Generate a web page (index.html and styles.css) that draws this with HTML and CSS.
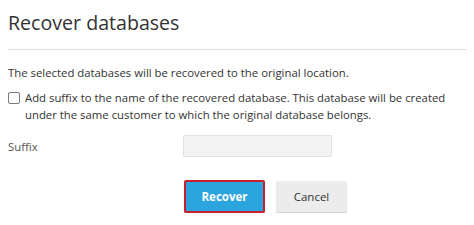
FILE: index.html
```html
<!DOCTYPE html>
<html>
<head>
<meta charset="utf-8">
<link rel="stylesheet" href="styles.css">
</head>
<body>
<div class="dialog">
  <h1 class="title">Recover databases</h1>
  <p class="intro">The selected databases will be recovered to the original location.</p>
  <label class="check-row">
    <input type="checkbox" class="check">
    <span>Add suffix to the name of the recovered database. This database will be created under the same customer to which the original database belongs.</span>
  </label>
  <div class="field-row">
    <span class="field-label">Suffix</span>
    <input type="text" class="field-input">
  </div>
  <div class="actions">
    <button class="btn btn-primary">Recover</button>
    <button class="btn btn-default">Cancel</button>
  </div>
</div>
</body>
</html>
```
FILE: styles.css
```css
html, body {
  margin: 0;
  padding: 0;
  background: #fff;
}
body {
  font-family: "Open Sans", "DejaVu Sans", sans-serif;
  color: #333;
  font-size: 11.35px;
}
.dialog {
  padding: 0 8px;
}
.title {
  margin: 0;
  padding-top: 8px;
  font-size: 19.6px;
  font-weight: 400;
  line-height: 30px;
  color: #333;
  height: 41px;
  border-bottom: 1px solid #dcdcdc;
}
.intro {
  margin: 14px 0 0;
  line-height: 17px;
}
.check-row {
  display: flex;
  gap: 5px;
  margin-top: 8px;
  line-height: 17px;
  padding-right: 10px;
}
.check {
  appearance: none;
  -webkit-appearance: none;
  flex: none;
  width: 12px;
  height: 12px;
  margin: 3px 0 0;
  border: 1px solid #7a7a7a;
  border-radius: 2px;
  background: #fff;
}
.field-row {
  display: flex;
  align-items: center;
  margin-top: 12px;
}
.field-label {
  width: 175px;
  color: #555;
}
.field-input {
  box-sizing: border-box;
  width: 149px;
  height: 22px;
  margin: 0;
  border: 1px solid #e2e2e2;
  background: #f3f3f3;
  border-radius: 1px;
}
.actions {
  display: flex;
  align-items: center;
  gap: 11px;
  margin-top: 23px;
  padding-left: 176px;
}
.btn {
  font-family: "Open Sans", "DejaVu Sans", sans-serif;
  font-size: 11.5px;
  border-radius: 2px;
  cursor: pointer;
  margin: 0;
  padding: 0;
}
.btn-primary {
  box-sizing: border-box;
  width: 81px;
  height: 33px;
  background: #2aa5de;
  color: #fff;
  font-weight: 700;
  border: 2px solid #c8202f;
  box-shadow: 0 1px 1px rgba(0,0,0,0.25);
}
.btn-default {
  box-sizing: border-box;
  width: 71px;
  height: 31px;
  background: #ececec;
  color: #333;
  border: none;
  box-shadow: 0 1px 1px rgba(0,0,0,0.2);
}
```
